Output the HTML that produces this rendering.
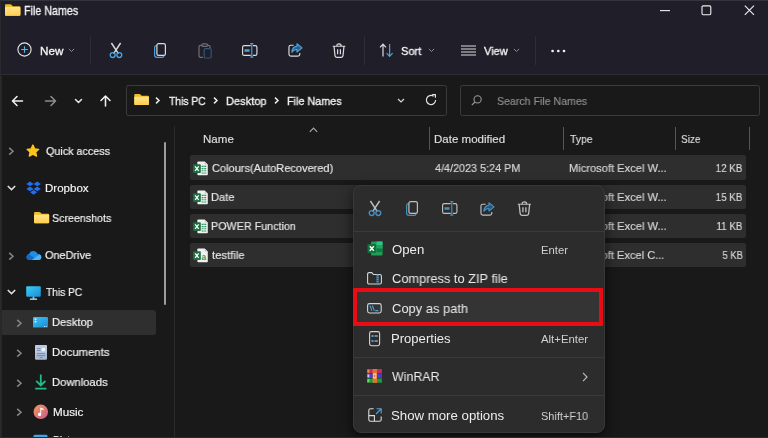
<!DOCTYPE html>
<html><head><meta charset="utf-8"><title>File Names</title>
<style>
*{box-sizing:border-box;margin:0;padding:0}
html,body{width:768px;height:438px;overflow:hidden;background:#191919}
body{position:relative;font-family:"Liberation Sans",sans-serif;font-size:11.5px;color:#fff;-webkit-font-smoothing:antialiased}
.abs{position:absolute}
.t{position:absolute;white-space:nowrap;line-height:14px;color:#f4f4f4;transform-origin:0 50%;-webkit-text-stroke:.18px currentColor;will-change:transform}
svg{position:absolute;overflow:visible}
#top{left:0;top:0;width:768px;height:75px;background:#201e29;border-top:1px solid #35343d;border-bottom:1px solid #2d2c33}
.vsep{width:1px;background:#2e2d36}
.box{border:1px solid #3c3c3c;border-radius:2.5px;background:#191919}
.row{left:189.6px;width:556.8px;height:24.4px;background:#2e2e2e;border-radius:2px}
.sel{left:0;top:309.6px;width:156px;height:25.2px;background:#2f2f2f;border-radius:0 3px 3px 0}
#menu{left:353px;top:185.4px;width:251.6px;height:247.6px;background:#2c2c2c;border:1px solid #383838;border-radius:8px;box-shadow:0 5px 14px rgba(0,0,0,.6)}
.msep{left:354px;width:250px;height:1px;background:#3a3a3a}
.hl{left:353px;top:288.4px;width:250px;height:37.4px;border:4.8px solid #ea0c14;background:#343434}
.m{-webkit-text-stroke:0;color:#ececec}
.k{-webkit-text-stroke:0}
.b{-webkit-text-stroke:.32px currentColor}
</style></head><body>

<svg width="0" height="0" style="left:0;top:0"><defs><linearGradient id="fg" x1="0" y1="0" x2="0" y2="1"><stop offset="0" stop-color="#ffe38c"/><stop offset="1" stop-color="#ffd04e"/></linearGradient></defs></svg>
<!-- title + toolbar -->
<div id="top" class="abs"></div>
<svg style="left:5.4px;top:3px" width="15.4" height="14" viewBox="0 0 16 14"><path d="M0 2 Q0 1 1 1 H5.6 Q6.2 1 6.8 1.6 L8 3 H15 Q16 3 16 4 V12 Q16 13 15 13 H1 Q0 13 0 12Z" fill="#f0bd28"/><path d="M0 4.6 Q0 4 .8 4 H15.2 Q16 4 16 4.8 V12 Q16 13 15 13 H1 Q0 13 0 12Z" fill="url(#fg)"/></svg>
<div class="t b" style="left:24.2px;top:3.7px;font-size:11.9px;transform:scaleX(0.901)">File Names</div>
<!-- window controls -->
<svg style="left:660px;top:5px" width="100" height="14" viewBox="0 0 100 14" fill="none" stroke="#f0f0f0" stroke-width="1.1"><path d="M0 5.6 H10"/><rect x="42" y="0.9" width="8.8" height="8.8" rx="1.2"/><path d="M84.8 0.6 L94 9.8 M94 0.6 L84.8 9.8"/></svg>

<!-- toolbar items -->
<svg style="left:17.2px;top:42.4px" width="15" height="15" viewBox="0 0 15 15" fill="none"><circle cx="7.5" cy="7.5" r="6.6" stroke="#e8e8e8" stroke-width="1.1"/><path d="M7.5 4.2 V10.8 M4.2 7.5 H10.8" stroke="#5fb4e6" stroke-width="1.1"/></svg>
<div class="t b" style="left:40.1px;top:44px;transform:scaleX(1.015)">New</div>
<svg style="left:68px;top:48.4px" width="7" height="4.4" viewBox="0 0 8 5" fill="none" stroke="#8f8f96" stroke-width="1.1"><path d="M1 1 L4 4 L7 1"/></svg>
<div class="abs vsep" style="left:90px;top:36px;height:29px"></div>
<!-- cut -->
<svg style="left:108.6px;top:41.8px" width="14" height="17" viewBox="0 0 14 17" fill="none" stroke-width="1.35"><path d="M2.4 1 L9.4 11.6 M11.6 1 L4.6 11.6" stroke="#d8d8d8" stroke-width="1.5"/><circle cx="3.7" cy="13" r="2.45" stroke="#4aa3dc"/><circle cx="10.3" cy="13" r="2.45" stroke="#4aa3dc"/></svg>
<!-- copy -->
<svg style="left:153.9px;top:43.1px" width="12" height="15" viewBox="0 0 12 15" fill="none" stroke-width="1.2"><path d="M2.4 2.6 Q0.6 2.8 0.6 4.6 V12 Q0.6 14.4 3 14.4 H8.4 Q9.8 14.4 10 13.2" stroke="#4aa3dc"/><rect x="2.9" y="0.6" width="8.5" height="11.8" rx="1.7" stroke="#dcdcdc"/></svg>
<!-- paste (disabled) -->
<svg style="left:198px;top:43px" width="14" height="16" viewBox="0 0 14 16" fill="none" stroke-width="1.2" opacity=".42"><path d="M4 2.4 H2.4 Q1 2.4 1 3.8 V13 Q1 14.4 2.4 14.4 H5" stroke="#dcdcdc"/><path d="M9.6 2.4 H10.6 Q12 2.4 12 3.8 V5" stroke="#dcdcdc"/><rect x="4" y="0.8" width="5.4" height="2.6" rx="1" stroke="#dcdcdc"/><rect x="6.2" y="5.6" width="7" height="9.4" rx="1.2" stroke="#4aa3dc"/></svg>
<!-- rename -->
<svg style="left:242px;top:43px" width="15.5" height="14.8" preserveAspectRatio="none" viewBox="0 0 16 15" fill="none" stroke-width="1.2"><path d="M9 2.6 H2.4 Q0.6 2.6 0.6 4.4 V10.8 Q0.6 12.6 2.4 12.6 H9 M11.2 2.6 H13.6 Q15.4 2.6 15.4 4.4 V10.8 Q15.4 12.6 13.6 12.6 H11.2" stroke="#dcdcdc"/><path d="M10.1 0.6 V14.4 M8.5 0.6 H11.7 M8.5 14.4 H11.7" stroke="#4aa3dc"/><rect x="2.6" y="6.3" width="5.2" height="2.6" fill="#4aa3dc"/></svg>
<!-- share -->
<svg style="left:287.8px;top:43.2px" width="15" height="14" viewBox="0 0 16 15" fill="none" stroke-width="1.25"><path d="M6 2.4 H3 Q1 2.4 1 4.4 V12 Q1 14 3 14 H10.6 Q12.6 14 12.6 12 V10.6" stroke="#dcdcdc"/><path d="M9.6 0.8 L15 5.2 L9.6 9.6 V7 Q6 6.8 4.2 10 Q4.4 4 9.6 3.4Z" stroke="#4aa3dc" stroke-linejoin="round" fill="#2a5f86"/></svg>
<!-- delete -->
<svg style="left:332.4px;top:42.8px" width="14" height="15.4" viewBox="0 0 15 17" preserveAspectRatio="none" fill="none" stroke="#dcdcdc" stroke-width="1.3"><path d="M0.8 3.6 H14.2 M5.2 3.4 Q5.2 1 7.5 1 Q9.8 1 9.8 3.4 M2.2 3.8 L3.2 14 Q3.4 15.8 5 15.8 H10 Q11.6 15.8 11.8 14 L12.8 3.8 M6 7 V12.4 M9 7 V12.4"/></svg>
<div class="abs vsep" style="left:364px;top:36px;height:29px"></div>
<!-- sort -->
<svg style="left:379px;top:43px" width="15" height="15" viewBox="0 0 15 15" fill="none" stroke-width="1.2"><path d="M4 13.4 V1.4 M1 4.4 L4 1.2 L7 4.4" stroke="#dcdcdc"/><path d="M10.6 1 V13.2 M7.6 10.2 L10.6 13.4 L13.6 10.2" stroke="#4aa3dc"/></svg>
<div class="t b" style="left:401.3px;top:44px;transform:scaleX(0.962)">Sort</div>
<svg style="left:428.4px;top:48.4px" width="7" height="4.4" viewBox="0 0 8 5" fill="none" stroke="#8f8f96" stroke-width="1.1"><path d="M1 1 L4 4 L7 1"/></svg>
<!-- view -->
<svg style="left:461px;top:45px" width="15" height="11" viewBox="0 0 15 11" fill="none" stroke="#dcdcdc" stroke-width="1.1"><path d="M0 1 H15 M0 4 H15 M0 7 H15 M0 10 H15"/></svg>
<div class="t b" style="left:483.6px;top:44px;transform:scaleX(0.955)">View</div>
<svg style="left:513px;top:48.4px" width="7" height="4.4" viewBox="0 0 8 5" fill="none" stroke="#8f8f96" stroke-width="1.1"><path d="M1 1 L4 4 L7 1"/></svg>
<div class="abs vsep" style="left:535px;top:36px;height:29px"></div>
<svg style="left:551px;top:49px" width="16" height="4" viewBox="0 0 16 4" fill="#f0f0f0"><circle cx="1.6" cy="2" r="1.35"/><circle cx="7.3" cy="2" r="1.35"/><circle cx="13" cy="2" r="1.35"/></svg>

<!-- nav row -->
<svg style="left:11px;top:95px" width="100" height="12" viewBox="0 0 100 12" fill="none" stroke-width="1.55" stroke-linecap="round" stroke-linejoin="round"><path d="M11.5 6 H1.5 M6 1.5 L1.5 6 L6 10.5" stroke="#f0f0f0"/><path d="M34.5 6 H44.5 M40 1.5 L44.5 6 L40 10.5" stroke="#8c8c8c"/><path d="M64.5 4.5 L67.5 7.5 L70.5 4.5" stroke="#e4e4e4"/><path d="M94.5 11 V1 M90 5.5 L94.5 1 L99 5.5" stroke="#f0f0f0"/></svg>
<div class="abs box" style="left:126px;top:84.6px;width:321.4px;height:31.8px"></div>
<svg style="left:134px;top:93.1px" width="15.2" height="12.8" viewBox="0 0 16 14"><path d="M0 2 Q0 1 1 1 H5.6 Q6.2 1 6.8 1.6 L8 3 H15 Q16 3 16 4 V12 Q16 13 15 13 H1 Q0 13 0 12Z" fill="#f0bd28"/><path d="M0 4.6 Q0 4 .8 4 H15.2 Q16 4 16 4.8 V12 Q16 13 15 13 H1 Q0 13 0 12Z" fill="url(#fg)"/></svg>
<svg style="left:155px;top:97px" width="5" height="7" viewBox="0 0 5 7" fill="none" stroke="#ececec" stroke-width="1.5"><path d="M1 0.6 L4 3.5 L1 6.4"/></svg>
<div class="t b" style="left:169.4px;top:94px;transform:scaleX(0.895)">This PC</div>
<svg style="left:213px;top:97px" width="5" height="7" viewBox="0 0 5 7" fill="none" stroke="#ececec" stroke-width="1.5"><path d="M1 0.6 L4 3.5 L1 6.4"/></svg>
<div class="t b" style="left:225.6px;top:94px;transform:scaleX(0.960)">Desktop</div>
<svg style="left:274px;top:97px" width="5" height="7" viewBox="0 0 5 7" fill="none" stroke="#ececec" stroke-width="1.5"><path d="M1 0.6 L4 3.5 L1 6.4"/></svg>
<div class="t b" style="left:287.0px;top:94px;transform:scaleX(0.939)">File Names</div>
<svg style="left:397px;top:98px" width="8" height="5" viewBox="0 0 8 5" fill="none" stroke="#d8d8d8" stroke-width="1.2"><path d="M1 1 L4 4 L7 1"/></svg>
<svg style="left:425px;top:94px" width="12" height="12" viewBox="0 0 12 12" fill="none" stroke="#e4e4e4" stroke-width="1.2"><path d="M10.6 6 A4.6 4.6 0 1 1 8.6 2.2"/><path d="M7.2 0.6 H10.4 V3.8" stroke-linejoin="round"/></svg>
<div class="abs box" style="left:459.6px;top:84.6px;width:300.4px;height:31.8px"></div>
<svg style="left:471px;top:95px" width="11" height="11" viewBox="0 0 11 11" fill="none" stroke="#9a9a9a" stroke-width="1.1"><circle cx="6.6" cy="4.4" r="3.6"/><path d="M4 7 L0.8 10.2"/></svg>
<div class="t" style="left:497.0px;top:94px;color:#8e8e8e;transform:scaleX(0.921)">Search File Names</div>

<!-- sidebar -->
<div class="abs sel"></div>
<div class="abs" style="left:164.2px;top:142px;width:1.7px;height:163px;background:#9c9c9c;border-radius:1px"></div>
<div class="abs" style="left:174px;top:126px;width:1px;height:312px;background:#2b2b2b"></div>
<svg style="left:8px;top:147.2px" width="6.4" height="8.6" viewBox="0 0 6.4 8.6" fill="none" stroke="#858585" stroke-width="1.55"><path d="M1.2 0.9 L5 4.3 L1.2 7.7"/></svg>
<svg style="left:26.3px;top:144.4px" width="13.8" height="13.4" viewBox="0 0 15 15"><path d="M7.5 1.2 L9.5 5.4 L14 6 L10.7 9.1 L11.5 13.6 L7.5 11.4 L3.5 13.6 L4.3 9.1 L1 6 L5.5 5.4Z" fill="#fcc31a" stroke="#fcc31a" stroke-linejoin="round" stroke-width="1.5"/></svg>
<div class="t" style="left:45.6px;top:144px;transform:scaleX(0.935)">Quick access</div>

<svg style="left:7px;top:185px" width="9" height="6" viewBox="0 0 9 6" fill="none" stroke="#dcdcdc" stroke-width="1.6"><path d="M0.8 1 L4.5 4.6 L8.2 1"/></svg>
<svg style="left:25.6px;top:181.2px" width="15.2" height="14" viewBox="0 0 15 13.4" preserveAspectRatio="none" fill="#1f6ef5"><path d="M3.9 0.5 L7.5 2.8 L3.9 5.1 L0.3 2.8Z M11.1 0.5 L14.7 2.8 L11.1 5.1 L7.5 2.8Z M3.9 5.3 L7.5 7.6 L3.9 9.9 L0.3 7.6Z M11.1 5.3 L14.7 7.6 L11.1 9.9 L7.5 7.6Z M7.5 8.6 L10.9 10.8 L7.5 13.1 L4.1 10.8Z"/></svg>
<div class="t" style="left:45.0px;top:181px;transform:scaleX(1.004)">Dropbox</div>
<svg style="left:33.5px;top:211.2px" width="15.2" height="13.2" viewBox="0 0 16 14"><path d="M0 2 Q0 1 1 1 H5.6 Q6.2 1 6.8 1.6 L8 3 H15 Q16 3 16 4 V12 Q16 13 15 13 H1 Q0 13 0 12Z" fill="#f0bd28"/><path d="M0 4.6 Q0 4 .8 4 H15.2 Q16 4 16 4.8 V12 Q16 13 15 13 H1 Q0 13 0 12Z" fill="url(#fg)"/></svg>
<div class="t" style="left:52.2px;top:211px;transform:scaleX(0.927)">Screenshots</div>

<svg style="left:8px;top:252.2px" width="6.4" height="8.6" viewBox="0 0 6.4 8.6" fill="none" stroke="#858585" stroke-width="1.55"><path d="M1.2 0.9 L5 4.3 L1.2 7.7"/></svg>
<svg style="left:25.5px;top:249.8px" width="15.8" height="10.6" viewBox="0 0 17 11"><path d="M4 10.5 Q0.5 10.5 0.5 7.4 Q0.5 4.8 3.2 4.4 Q4.4 0.8 8 0.8 Q11.2 0.8 12.4 3.8 Q16.5 4 16.5 7.4 Q16.5 10.5 13.4 10.5Z" fill="#1f8fe6"/><path d="M4 10.5 Q0.5 10.5 0.5 7.4 Q0.5 5 3 4.5 L13 10.5Z" fill="#1568c4"/><path d="M13.4 10.5 Q16.5 10.5 16.5 7.4 Q16.5 5.4 14.6 4.6 L6 10.5Z" fill="#4fb5f5"/></svg>
<div class="t" style="left:45.0px;top:248px;transform:scaleX(0.947)">OneDrive</div>

<svg style="left:7px;top:289px" width="9" height="6" viewBox="0 0 9 6" fill="none" stroke="#dcdcdc" stroke-width="1.6"><path d="M0.8 1 L4.5 4.6 L8.2 1"/></svg>
<svg style="left:26px;top:285.8px" width="15" height="14" viewBox="0 0 15 14"><defs><linearGradient id="pcg" x1="0" y1="0" x2="1" y2="1"><stop offset="0" stop-color="#3ad0f4"/><stop offset="1" stop-color="#1a8cd6"/></linearGradient></defs><rect x="0.2" y="0.3" width="14.6" height="10.4" rx="1" fill="url(#pcg)"/><rect x="6.6" y="10.6" width="1.8" height="2.2" fill="#7cc8ea"/><rect x="3.8" y="12.6" width="7.4" height="1.1" rx=".5" fill="#d4ecf8"/></svg>
<div class="t" style="left:46.4px;top:285px;transform:scaleX(0.887)">This PC</div>

<svg style="left:16px;top:319.2px" width="6.4" height="8.6" viewBox="0 0 6.4 8.6" fill="none" stroke="#858585" stroke-width="1.55"><path d="M1.2 0.9 L5 4.3 L1.2 7.7"/></svg>
<svg style="left:33.3px;top:316.8px" width="15" height="10.6" viewBox="0 0 15 10.6"><defs><linearGradient id="dkg" x1="0" y1="0" x2="1" y2="1"><stop offset="0" stop-color="#40c4f4"/><stop offset="1" stop-color="#188ad8"/></linearGradient></defs><rect x="0" y="0" width="15" height="10.6" rx="1.2" fill="url(#dkg)"/><rect x="1.7" y="1.6" width="1.7" height="1.5" fill="#e6f6fe"/><rect x="1.7" y="4" width="1.7" height="1.5" fill="#e6f6fe"/><rect x="11" y="9" width=".9" height=".9" fill="#e6f6fe"/><rect x="12.7" y="9" width=".9" height=".9" fill="#e6f6fe"/></svg>
<div class="t" style="left:52.0px;top:315px;transform:scaleX(0.968)">Desktop</div>

<svg style="left:16px;top:349.2px" width="6.4" height="8.6" viewBox="0 0 6.4 8.6" fill="none" stroke="#858585" stroke-width="1.55"><path d="M1.2 0.9 L5 4.3 L1.2 7.7"/></svg>
<svg style="left:34.9px;top:344.8px" width="12" height="14.8" viewBox="0 0 12 14.8"><rect x="0" y="0" width="12" height="14.8" rx="1.4" fill="#a9bcd4"/><rect x="0" y="0" width="12" height="8" rx="1.4" fill="#bccbdf"/><rect x="6.8" y="3" width="3.2" height="3.2" fill="#f2f6fb"/><path d="M2 3.6 H5.6 M2 5.6 H5.6 M2 8.4 H10 M2 10.6 H10 M4.5 12.6 H7.5" stroke="#6d87ad" stroke-width=".9"/></svg>
<div class="t" style="left:52.0px;top:345px;transform:scaleX(0.988)">Documents</div>

<svg style="left:16px;top:379.2px" width="6.4" height="8.6" viewBox="0 0 6.4 8.6" fill="none" stroke="#858585" stroke-width="1.55"><path d="M1.2 0.9 L5 4.3 L1.2 7.7"/></svg>
<svg style="left:35.2px;top:373.8px" width="11.6" height="15.6" viewBox="0 0 11.6 15.6" fill="none" stroke="#26b98a" stroke-width="1.8"><path d="M5.8 0.4 V11 M1.2 6.8 L5.8 11.4 L10.4 6.8 M0.2 14.6 H11.4"/></svg>
<div class="t" style="left:52.0px;top:375px;transform:scaleX(0.977)">Downloads</div>

<svg style="left:16px;top:408.2px" width="6.4" height="8.6" viewBox="0 0 6.4 8.6" fill="none" stroke="#858585" stroke-width="1.55"><path d="M1.2 0.9 L5 4.3 L1.2 7.7"/></svg>
<svg style="left:33.1px;top:404.1px" width="15.6" height="15.6" viewBox="0 0 15 15"><defs><linearGradient id="mg" x1="0" y1="0" x2="1" y2="1"><stop offset="0" stop-color="#f09a5c"/><stop offset="1" stop-color="#c85a8e"/></linearGradient></defs><circle cx="7.5" cy="7.5" r="7" fill="url(#mg)"/><path d="M7 3.4 L10.2 4.6 V6 L7.9 5.2 V10 A1.6 1.6 0 1 1 7 8.6Z" fill="#fff"/></svg>
<div class="t" style="left:52.7px;top:404.6px;transform:scaleX(1.013)">Music</div>

<svg style="left:33px;top:434px" width="15" height="6" viewBox="0 0 15 6"><rect x="0.5" y="0.8" width="14" height="8" rx="1.4" fill="#3ba7ea"/></svg>
<div class="t" style="left:52.8px;top:433px;transform:scaleX(0.885)">Pictures</div>

<!-- column headers -->
<svg style="left:309px;top:126.8px" width="9" height="6" viewBox="0 0 9 6" fill="none" stroke="#a6a6a6" stroke-width="1.2"><path d="M0.8 4.8 L4.5 1 L8.2 4.8"/></svg>
<div class="t" style="left:203.3px;top:132px;color:#dedede;transform:scaleX(1.004)">Name</div>
<div class="abs" style="left:429px;top:127px;width:1px;height:23px;background:#555"></div>
<div class="t" style="left:434.4px;top:132px;color:#dedede;transform:scaleX(1.003)">Date modified</div>
<div class="abs" style="left:563px;top:127px;width:1px;height:23px;background:#555"></div>
<div class="t" style="left:570.2px;top:132px;color:#dedede;transform:scaleX(0.904)">Type</div>
<div class="abs" style="left:675px;top:127px;width:1px;height:23px;background:#555"></div>
<div class="t" style="left:680.9px;top:132px;color:#dedede;transform:scaleX(0.870)">Size</div>
<div class="abs" style="left:749px;top:127px;width:1px;height:23px;background:#555"></div>

<!-- file rows -->
<div class="abs row" style="top:155.4px;height:24.8px"></div>
<div class="abs row" style="top:184.8px"></div>
<div class="abs row" style="top:213.5px"></div>
<div class="abs row" style="top:242.7px"></div>

<svg id="xl" style="display:none"><symbol id="xls" viewBox="0 0 15 15"><path d="M4.4 1.2 Q4.4 0.4 5.2 0.4 H11.6 L14.8 3.6 V13.4 Q14.8 14.2 14 14.2 H5.2 Q4.4 14.2 4.4 13.4Z" fill="#f1f1f1"/><path d="M11.6 0.4 V3.6 H14.8Z" fill="#c9c9c9"/><path d="M8.6 5.4 H13.2 M8.6 7.6 H13.2 M8.6 9.8 H13.2 M8.6 12 H13.2" stroke="#2c9a5c" stroke-width="1.1"/><path d="M10.9 4.9 V12.5" stroke="#f1f1f1" stroke-width=".7"/><rect x="0" y="3.2" width="7.8" height="8.8" rx=".7" fill="#1a7040"/><path d="M2.1 5.4 L5.7 9.8 M5.7 5.4 L2.1 9.8" stroke="#fff" stroke-width="1.3"/></symbol><symbol id="csv" viewBox="0 0 15 15"><path d="M4.4 1.2 Q4.4 0.4 5.2 0.4 H11.6 L14.8 3.6 V13.4 Q14.8 14.2 14 14.2 H5.2 Q4.4 14.2 4.4 13.4Z" fill="#f1f1f1"/><path d="M11.6 0.4 V3.6 H14.8Z" fill="#c9c9c9"/><text x="8.6" y="11.6" font-family="Liberation Sans, sans-serif" font-size="8.2" font-weight="bold" fill="#2c9a5c">a</text><rect x="0" y="3.2" width="7.8" height="8.8" rx=".7" fill="#1a7040"/><path d="M2.1 5.4 L5.7 9.8 M5.7 5.4 L2.1 9.8" stroke="#fff" stroke-width="1.3"/></symbol></svg>
<svg style="left:192.7px;top:160.5px" width="15" height="15"><use href="#xls"/></svg>
<svg style="left:192.7px;top:189.6px" width="15" height="15"><use href="#xls"/></svg>
<svg style="left:192.7px;top:218.6px" width="15" height="15"><use href="#xls"/></svg>
<svg style="left:192.7px;top:247.6px" width="15" height="15"><use href="#csv"/></svg>
<div class="t" style="left:211.7px;top:161px;color:#e6e6e6;transform:scaleX(0.958)">Colours(AutoRecovered)</div>
<div class="t" style="left:211.2px;top:190px;color:#e6e6e6;transform:scaleX(0.965)">Date</div>
<div class="t" style="left:211.2px;top:219px;color:#e6e6e6;transform:scaleX(0.935)">POWER Function</div>
<div class="t" style="left:211.8px;top:248px;color:#e6e6e6;transform:scaleX(0.981)">testfile</div>
<div class="t" style="left:435.0px;top:161px;color:#d6d6d6;transform:scaleX(0.940)">4/4/2023 5:24 PM</div>
<div class="t" style="left:568.8px;top:161px;color:#d6d6d6;transform:scaleX(0.967)">Microsoft Excel W...</div>
<div class="t" style="left:568.8px;top:190px;color:#d6d6d6;transform:scaleX(0.967)">Microsoft Excel W...</div>
<div class="t" style="left:568.8px;top:219px;color:#d6d6d6;transform:scaleX(0.967)">Microsoft Excel W...</div>
<div class="t" style="left:568.8px;top:248px;color:#d6d6d6;transform:scaleX(0.963)">Microsoft Excel C...</div>
<div class="t" style="right:25.6px;top:161px;color:#d6d6d6;transform-origin:100% 50%;transform:scaleX(0.850)">12 KB</div>
<div class="t" style="right:25.6px;top:190px;color:#d6d6d6;transform-origin:100% 50%;transform:scaleX(0.850)">15 KB</div>
<div class="t" style="right:25.6px;top:219px;color:#d6d6d6;transform-origin:100% 50%;transform:scaleX(0.855)">11 KB</div>
<div class="t" style="right:25.4px;top:248px;color:#d6d6d6;transform-origin:100% 50%;transform:scaleX(0.819)">5 KB</div>

<!-- context menu -->
<div id="menu" class="abs"></div>
<div class="abs msep" style="top:230.6px"></div>
<div class="abs msep" style="top:357.2px"></div>
<div class="abs msep" style="top:395px"></div>
<div class="abs hl"></div>
<!-- menu top icons -->
<svg style="left:367.8px;top:200.2px;opacity:.84" width="14" height="17" viewBox="0 0 14 17" fill="none" stroke-width="1.35"><path d="M2.4 1 L9.4 11.6 M11.6 1 L4.6 11.6" stroke="#d8d8d8" stroke-width="1.5"/><circle cx="3.7" cy="13" r="2.45" stroke="#4aa3dc"/><circle cx="10.3" cy="13" r="2.45" stroke="#4aa3dc"/></svg>
<svg style="left:406px;top:201.2px;opacity:.84" width="12" height="15" viewBox="0 0 12 15" fill="none" stroke-width="1.2"><path d="M2.4 2.6 Q0.6 2.8 0.6 4.6 V12 Q0.6 14.4 3 14.4 H8.4 Q9.8 14.4 10 13.2" stroke="#4aa3dc"/><rect x="2.9" y="0.6" width="8.5" height="11.8" rx="1.7" stroke="#dcdcdc"/></svg>
<svg style="left:441.5px;top:201.3px;opacity:.84" width="15.5" height="14.8" preserveAspectRatio="none" viewBox="0 0 16 15" fill="none" stroke-width="1.2"><path d="M9 2.6 H2.4 Q0.6 2.6 0.6 4.4 V10.8 Q0.6 12.6 2.4 12.6 H9 M11.2 2.6 H13.6 Q15.4 2.6 15.4 4.4 V10.8 Q15.4 12.6 13.6 12.6 H11.2" stroke="#dcdcdc"/><path d="M10.1 0.6 V14.4 M8.5 0.6 H11.7 M8.5 14.4 H11.7" stroke="#4aa3dc"/><rect x="2.6" y="6.3" width="5.2" height="2.6" fill="#4aa3dc"/></svg>
<svg style="left:479.6px;top:201.8px;opacity:.84" width="15" height="14" viewBox="0 0 16 15" fill="none" stroke-width="1.25"><path d="M6 2.4 H3 Q1 2.4 1 4.4 V12 Q1 14 3 14 H10.6 Q12.6 14 12.6 12 V10.6" stroke="#dcdcdc"/><path d="M9.6 0.8 L15 5.2 L9.6 9.6 V7 Q6 6.8 4.2 10 Q4.4 4 9.6 3.4Z" stroke="#4aa3dc" stroke-linejoin="round" fill="#2a5f86"/></svg>
<svg style="left:516.5px;top:200.9px;opacity:.84" width="14.8" height="15.4" viewBox="0 0 15 17" preserveAspectRatio="none" fill="none" stroke="#dcdcdc" stroke-width="1.3"><path d="M0.8 3.6 H14.2 M5.2 3.4 Q5.2 1 7.5 1 Q9.8 1 9.8 3.4 M2.2 3.8 L3.2 14 Q3.4 15.8 5 15.8 H10 Q11.6 15.8 11.8 14 L12.8 3.8 M6 7 V12.4 M9 7 V12.4"/></svg>

<!-- menu items -->
<svg style="left:367px;top:241px" width="16" height="15" viewBox="0 0 16 15"><rect x="4" y="0.5" width="11.5" height="14" rx="1" fill="#1f9d55"/><rect x="9.6" y="0.5" width="5.9" height="3.5" fill="#33c481"/><rect x="9.6" y="4" width="5.9" height="3.5" fill="#21a366"/><rect x="9.6" y="7.5" width="5.9" height="3.5" fill="#107c41"/><rect x="0.5" y="3" width="8.6" height="9" rx=".8" fill="#0f733b"/><path d="M2.8 5.2 L6.8 9.8 M6.8 5.2 L2.8 9.8" stroke="#fff" stroke-width="1.4"/></svg>
<div class="t m" style="left:391.9px;top:242px;font-size:13px;line-height:16px;transform:scaleX(1.016)">Open</div>
<div class="t k" style="left:541.0px;top:243px;font-size:11px;color:#d0d0d0;transform:scaleX(1.027)">Enter</div>

<svg style="left:367.4px;top:272.4px" width="15" height="12.6" viewBox="0 0 15 12.6" fill="none" stroke-width="1.1"><path d="M0.6 2.2 Q0.6 0.6 2.2 0.6 H4.8 L6.4 2.5 H12.8 Q14.4 2.5 14.4 4.1 V10.4 Q14.4 12 12.8 12 H2.2 Q0.6 12 0.6 10.4Z" stroke="#d6d6d6"/><path d="M10.6 2.6 V12" stroke="#3f97d3" stroke-width="2.4" stroke-dasharray="1.3 .7"/><path d="M0.6 4.6 H6" stroke="#d6d6d6" opacity=".0"/></svg>
<div class="t m" style="left:391.9px;top:271.2px;font-size:13px;line-height:16px;transform:scaleX(0.985)">Compress to ZIP file</div>

<svg style="left:367.1px;top:302.8px" width="14.8" height="10.6" viewBox="0 0 14.8 10.6" fill="none" stroke-width="1.1"><rect x="0.6" y="0.6" width="13.6" height="9.4" rx="1.9" stroke="#d6d6d6"/><path d="M3 2.6 L4.9 7.6 M5.4 2.6 L7.3 7.6 M8.2 7.7 H11.4" stroke="#4aa3dc" stroke-width="1.15"/></svg>
<div class="t m" style="left:391.9px;top:301.2px;font-size:13px;line-height:16px;transform:scaleX(0.994)">Copy as path</div>

<svg style="left:369.2px;top:330.7px" width="11.2" height="15.3" viewBox="0 0 11.2 15.3" fill="none" stroke-width="1.1"><rect x="0.6" y="0.6" width="10" height="14.1" rx="1.9" stroke="#d6d6d6"/><rect x="2.5" y="4" width="2" height="2" fill="#4aa3dc"/><rect x="2.5" y="9" width="2" height="2" fill="#4aa3dc"/><path d="M5.5 5 H8.8 M5.5 10 H8.8" stroke="#d6d6d6"/></svg>
<div class="t m" style="left:391.4px;top:330.7px;font-size:13px;line-height:16px;transform:scaleX(1.006)">Properties</div>
<div class="t k" style="left:541.2px;top:332.4px;font-size:11px;color:#d0d0d0;transform:scaleX(1.033)">Alt+Enter</div>

<svg style="left:367.3px;top:368.7px" width="15" height="13.8" viewBox="0 0 15 13.8"><rect x="0" y="0" width="15" height="4.4" rx=".6" fill="#c62a5c"/><rect x="0" y="4.7" width="15" height="4.4" rx=".6" fill="#4a3ec4"/><rect x="0" y="9.4" width="15" height="4.4" rx=".6" fill="#1e9a3e"/><rect x="0.4" y="0.6" width="2" height="3.2" fill="#f08a48"/><rect x="0.4" y="5.3" width="2" height="3.2" fill="#c4c0ee"/><rect x="0.4" y="10" width="2" height="3.2" fill="#66d868"/><rect x="5.6" y="0" width="4.4" height="13.8" fill="#e2742c"/><rect x="6.3" y="4.4" width="3" height="5" fill="#f3dcd2"/><rect x="7.3" y="5.6" width="1" height="2.6" fill="#c0392b"/></svg>
<div class="t m" style="left:392.4px;top:368.8px;font-size:13px;line-height:16px;transform:scaleX(0.953)">WinRAR</div>
<svg style="left:582px;top:372px" width="6" height="10" viewBox="0 0 6 10" fill="none" stroke="#b8b8b8" stroke-width="1.2"><path d="M1 0.8 L5 5 L1 9.2"/></svg>

<svg style="left:368px;top:408px" width="14" height="14" viewBox="0 0 14 14" fill="none" stroke-width="1.1"><path d="M5.6 0.8 H2.6 Q0.8 0.8 0.8 2.6 V11.4 Q0.8 13.2 2.6 13.2 H11.4 Q13.2 13.2 13.2 11.4 V8.4" stroke="#dcdcdc"/><path d="M0.8 7.6 H6.4 V13.2" stroke="#dcdcdc"/><path d="M8.6 0.8 H13.2 V5.4 M13 1 L8 6" stroke="#4aa3dc"/></svg>
<div class="t m" style="left:391.4px;top:407.5px;font-size:13px;line-height:16px;transform:scaleX(1.017)">Show more options</div>
<div class="t k" style="left:541.3px;top:408.6px;font-size:11px;color:#d0d0d0;transform:scaleX(0.993)">Shift+F10</div>

<div class="abs" style="left:0;top:0;width:1px;height:438px;background:#2a2a2e"></div>
<div class="abs" style="left:1px;top:76px;width:1px;height:362px;background:#262626"></div>
<!-- bottom strip -->
<div class="abs" style="left:0;top:437.2px;width:768px;height:1px;background:#2a2a2a"></div>
</body></html>
